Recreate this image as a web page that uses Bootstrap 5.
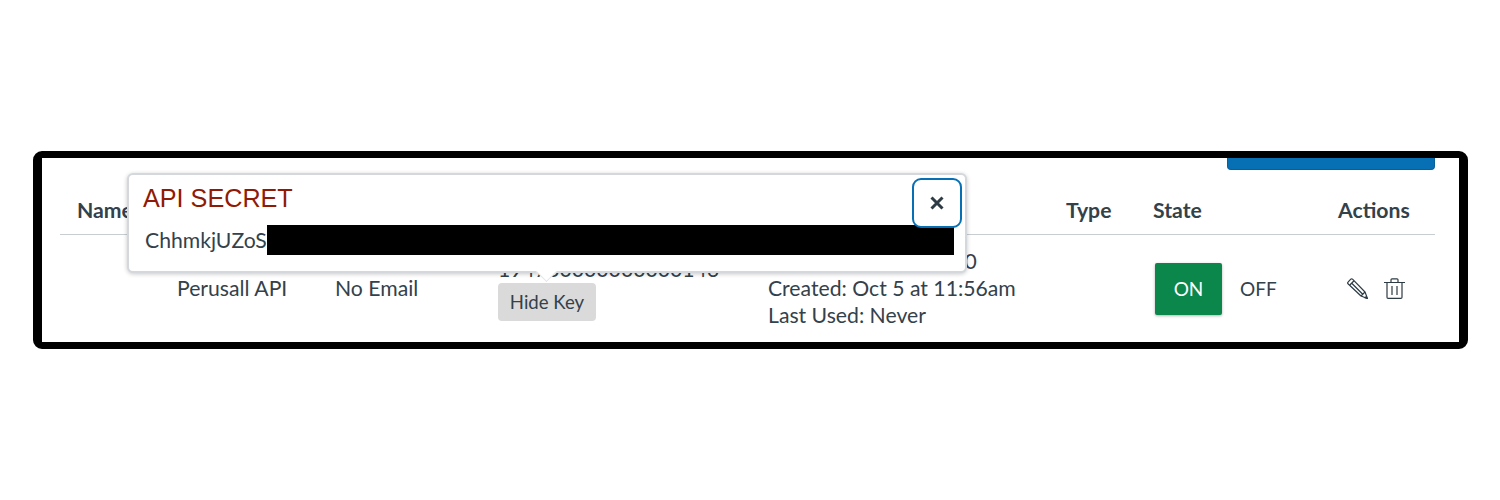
<!DOCTYPE html>
<html lang="en">
  <head>
    <meta charset="UTF-8" />
    <meta name="viewport" content="width=device-width, initial-scale=1.0" />
    <title>Developer Keys</title>
    <link href="https://cdn.jsdelivr.net/npm/bootstrap@5.3.0/dist/css/bootstrap.min.css" rel="stylesheet" />
    <style>
      body {
        font-family: Lato, "Liberation Sans", sans-serif;
        color: #2d3b45;
        background: #fff;
      }
      .shot-frame {
        width: 1435px;
        height: 198px;
        margin: 151px 0 0 33px;
        padding: 0 23px 0 18px;
        border-style: solid;
        border-color: #000;
        border-width: 7px 9px;
        border-radius: 9px;
        overflow: hidden;
      }
      .top-btn {
        width: 208px;
        height: 12px;
        margin-right: 1px;
        background: #0770b5;
        border: 1px solid #0a5f9a;
        border-top: 0;
        border-radius: 0 0 4px 4px;
      }
      .key-table {
        width: 1375px;
        table-layout: fixed;
        font-size: 21.2px;
        line-height: 27px;
        --bs-table-color: #33414b;
      }
      .key-table th {
        height: 64px;
        padding: 18px 0 0 17px;
        font-weight: 700;
        border-bottom: 1px solid #c7cdd1;
        vertical-align: middle;
      }
      .key-table td {
        height: 108px;
        padding: 1px 0 0 17px;
        border: 0;
        vertical-align: middle;
        font-weight: 400;
      }
      .key-table td.name-cell {
        padding-left: 117px;
      }
      .hide-btn {
        display: block;
        width: 98px;
        height: 38px;
        padding: 0;
        font-size: 18.6px;
        line-height: 38px;
        color: #33414b;
        background: #dadada;
        border: 0;
        border-radius: 4px;
      }
      .on-btn {
        width: 67px;
        height: 52px;
        margin-left: 2px;
        padding: 0;
        font-size: 19px;
        color: #fff;
        background: #0b874b;
        border: 0;
        border-radius: 2px;
        box-shadow: 0 1px 3px rgba(0, 0, 0, 0.3);
      }
      .off-label {
        font-size: 19px;
        margin-left: 18px;
      }
      .secret-pop {
        left: 85px;
        top: 15px;
        width: 840px;
        height: 100px;
        padding: 8px 11px 0 14px;
        color: #33414b;
        background: #fff;
        border: 2px solid #d4d8dc;
        border-radius: 6px;
        box-shadow: 0 1px 4px rgba(0, 0, 0, 0.22);
        z-index: 5;
      }
      .secret-title {
        font-family: "Liberation Sans", Arial, sans-serif;
        font-size: 25.2px;
        line-height: 30px;
        color: #8f1a06;
        margin: 0 0 12px;
        font-weight: 400;
      }
      .secret-line {
        font-size: 21.2px;
        line-height: 30px;
        padding-left: 2px;
      }
      .secret-black {
        display: block;
        flex: 1;
        height: 30px;
        background: #000;
      }
      .close-ring {
        top: 3px;
        right: 3px;
        width: 50px;
        height: 50px;
        padding: 0;
        background: #fff;
        border: 2px solid #0770b5;
        border-radius: 9px;
      }
      .pop-arrow {
        left: 410px;
        bottom: -8px;
        width: 15px;
        height: 15px;
        background: #fff;
        border-right: 1px solid #e2e5e8;
        border-bottom: 1px solid #e2e5e8;
        transform: rotate(45deg);
      }
      .act-icons {
        padding-left: 9px;
      }
    </style>
  </head>
  <body>
    <div class="shot-frame position-relative">
      <div class="d-flex justify-content-end">
        <div class="top-btn"></div>
      </div>
      <table class="table key-table mb-0">
        <colgroup>
          <col style="width: 258px" />
          <col style="width: 163px" />
          <col style="width: 270px" />
          <col style="width: 298px" />
          <col style="width: 87px" />
          <col style="width: 185px" />
          <col style="width: 114px" />
        </colgroup>
        <thead>
          <tr>
            <th>Name</th>
            <th>Owner Email</th>
            <th>Details</th>
            <th>Stats</th>
            <th>Type</th>
            <th>State</th>
            <th>Actions</th>
          </tr>
        </thead>
        <tbody>
          <tr>
            <td class="name-cell">Perusall API</td>
            <td>No Email</td>
            <td>
              <div>194700000000000143</div>
              <button type="button" class="btn hide-btn">Hide Key</button>
            </td>
            <td>
              <div>Access Token Count: 0</div>
              <div>Created: Oct 5 at 11:56am</div>
              <div>Last Used: Never</div>
            </td>
            <td></td>
            <td>
              <div class="d-flex align-items-center">
                <button type="button" class="btn on-btn">ON</button>
                <span class="off-label">OFF</span>
              </div>
            </td>
            <td>
              <div class="d-flex align-items-center gap-3 act-icons">
                <svg width="21" height="21" viewBox="0 0 21 21" fill="none" stroke="#2d3b45" stroke-width="1.2" stroke-linejoin="round">
                  <path d="M1 4.2 3.8 1.2a1.2 1.2 0 0 1 1.7 0L18 14l2.5 6.5L14 18 1 5.8a1.1 1.1 0 0 1 0-1.6Z" />
                  <path d="M2.8 7 6.8 3M5 5.5l11 11M14 18l4-4" />
                  <path d="M17 20l3.4 1-1-3.4Z" fill="#2d3b45" stroke="none" />
                </svg>
                <svg width="21" height="21" viewBox="0 0 21 21" fill="none" stroke="#2d3b45" stroke-width="1.2" stroke-linejoin="round">
                  <path d="M0 4.5h21M7 4.5V1.8a1 1 0 0 1 1-1h5a1 1 0 0 1 1 1v2.7" />
                  <path d="M3 4.5v14.7a1.2 1.2 0 0 0 1.2 1.2h12.6a1.2 1.2 0 0 0 1.2-1.2V4.5" />
                  <path d="M8 8v9M13 8v9" />
                </svg>
              </div>
            </td>
          </tr>
        </tbody>
      </table>

      <div class="secret-pop position-absolute">
        <h3 class="secret-title">API SECRET</h3>
        <div class="secret-line d-flex">
          <span>ChhmkjUZoS</span>
          <span class="secret-black position-relative"></span>
        </div>
        <button type="button" class="close-ring position-absolute d-flex align-items-center justify-content-center" aria-label="Close">
          <svg width="14" height="14" viewBox="0 0 14 14" stroke="#2d3b45" stroke-width="3">
            <path d="M1.5 1.5 12.5 12.5M12.5 1.5 1.5 12.5" />
          </svg>
        </button>
        <div class="pop-arrow position-absolute"></div>
      </div>
    </div>
    <script src="https://cdn.jsdelivr.net/npm/bootstrap@5.3.0/dist/js/bootstrap.bundle.min.js"></script>
  </body>
</html>
